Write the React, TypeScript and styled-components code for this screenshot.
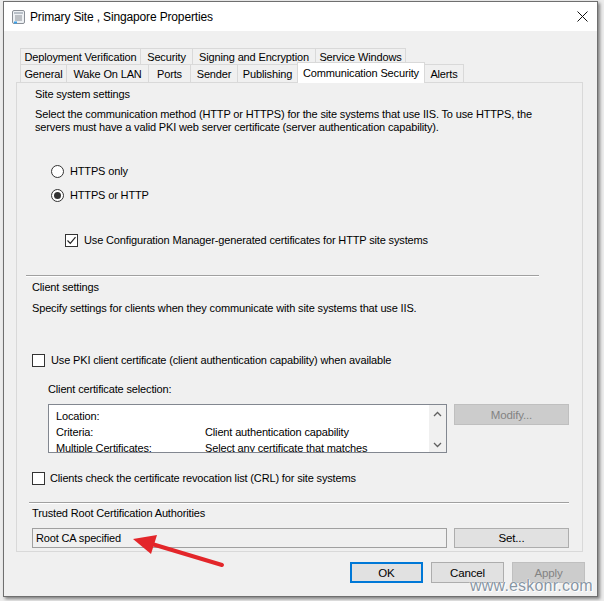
import styled, { createGlobalStyle } from 'styled-components';

const GlobalStyle = createGlobalStyle`
  html, body { margin: 0; padding: 0; }
  body {
    background: #ececec;
    font-family: "Liberation Sans", Arial, sans-serif;
    font-size: 11px;
    letter-spacing: -0.15px;
    color: #000;
  }
`;

const Screen = styled.div`
  position: relative;
  width: 604px;
  height: 601px;
  overflow: hidden;
  box-sizing: border-box;
  padding: 1px 0 0 3px;
  background: #ececec;
`;

const Window = styled.div`
  width: 595px;
  height: 596px;
  box-sizing: border-box;
  border: 1px solid #6f6f6f;
  background: #f0f0f0;
  box-shadow: 2px 2px 3px rgba(0, 0, 0, 0.45);
  display: flex;
  flex-direction: column;
`;

const TitleBar = styled.div`
  height: 29px;
  background: #fff;
  display: flex;
  align-items: center;
  padding: 0 9px 0 8px;
`;

const TitleText = styled.div`
  margin-left: 5px;
  font-size: 12px;
  flex: 1;
`;

const Body = styled.div`
  flex: 1;
  padding: 17px 0 0 12px;
  display: flex;
  flex-direction: column;
`;

const TabStrip = styled.div`
  margin-left: 4px;
  display: flex;
  flex-direction: column;
`;

const TabRow = styled.div<{ $h: number }>`
  display: flex;
  height: ${(p) => p.$h}px;
  align-items: flex-end;
`;

const Tab = styled.div<{ $w: number; $active?: boolean }>`
  position: relative;
  box-sizing: border-box;
  width: ${(p) => p.$w}px;
  height: ${(p) => (p.$active ? 'calc(100% + 3px)' : '100%')};
  margin-left: -1px;
  margin-bottom: ${(p) => (p.$active ? '-1px' : '0')};
  z-index: ${(p) => (p.$active ? 2 : 0)};
  border: 1px solid #d9d9d9;
  border-bottom: none;
  background: ${(p) => (p.$active ? '#fff' : '#f0f0f0')};
  display: flex;
  align-items: center;
  justify-content: center;
  white-space: nowrap;
  padding-top: ${(p) => (p.$active ? '0' : '1px')};
  &:first-child {
    margin-left: 0;
  }
`;

const Panel = styled.div`
  position: relative;
  z-index: 1;
  box-sizing: border-box;
  width: 567px;
  height: 470px;
  border: 1px solid #d9d9d9;
  background: #f0f0f0;
  display: flex;
  flex-direction: column;
`;

const Line = styled.div<{ $top: number; $indent: number; $lh?: number }>`
  margin-top: ${(p) => p.$top}px;
  margin-left: ${(p) => p.$indent}px;
  line-height: ${(p) => p.$lh ?? 14}px;
  white-space: nowrap;
`;

const OptionRow = styled.div<{ $top: number; $indent: number; $gap?: number }>`
  margin-top: ${(p) => p.$top}px;
  margin-left: ${(p) => p.$indent}px;
  height: 14px;
  display: flex;
  align-items: center;
  gap: ${(p) => p.$gap ?? 6}px;
  white-space: nowrap;
`;

const Radio = styled.span<{ $checked?: boolean }>`
  box-sizing: border-box;
  width: 13px;
  height: 13px;
  border-radius: 50%;
  border: 1px solid #333;
  background: #fff;
  display: flex;
  align-items: center;
  justify-content: center;
  &::after {
    content: '';
    width: 7px;
    height: 7px;
    border-radius: 50%;
    background: ${(p) => (p.$checked ? '#333' : 'transparent')};
  }
`;

const Box = styled.span`
  box-sizing: border-box;
  width: 13px;
  height: 13px;
  border: 1px solid #333;
  background: #fff;
  display: flex;
  align-items: center;
  justify-content: center;
`;

const Separator = styled.div<{ $top: number; $indent: number; $w: number }>`
  margin-top: ${(p) => p.$top}px;
  margin-left: ${(p) => p.$indent}px;
  width: ${(p) => p.$w}px;
  border-top: 1px solid #a0a0a0;
  border-bottom: 1px solid #fff;
`;

const ControlRow = styled.div<{ $top: number; $indent: number }>`
  margin-top: ${(p) => p.$top}px;
  margin-left: ${(p) => p.$indent}px;
  display: flex;
  align-items: flex-start;
  gap: 7px;
`;

const ListBox = styled.div`
  position: relative;
  box-sizing: border-box;
  width: 399px;
  height: 49px;
  border: 1px solid #828790;
  background: #fff;
  overflow: hidden;
  padding: 3px 0 0 7px;
`;

const ListItem = styled.div`
  display: flex;
  line-height: 16px;
  white-space: nowrap;
`;

const ListKey = styled.span`
  width: 149px;
`;

const ScrollBar = styled.div`
  position: absolute;
  top: 0;
  right: 0;
  bottom: 0;
  width: 17px;
  background: #f0f0f0;
  display: flex;
  flex-direction: column;
  justify-content: space-between;
  align-items: center;
  padding: 6px 0 4px;
  box-sizing: border-box;
`;

const TextBox = styled.div`
  box-sizing: border-box;
  width: 415px;
  height: 20px;
  border: 1px solid #a0a0a0;
  background: #f0f0f0;
  padding-left: 3px;
  line-height: 18px;
`;

const Button = styled.div<{ $w: number; $h: number; $disabled?: boolean; $default?: boolean }>`
  box-sizing: border-box;
  width: ${(p) => p.$w}px;
  height: ${(p) => p.$h}px;
  border: ${(p) =>
    p.$default ? '2px solid #0078d7' : p.$disabled ? '1px solid #bfbfbf' : '1px solid #adadad'};
  background: ${(p) => (p.$disabled ? '#cccccc' : '#e1e1e1')};
  color: ${(p) => (p.$disabled ? '#838383' : '#000')};
  display: flex;
  align-items: center;
  justify-content: center;
  font-size: 11.5px;
`;

const ButtonBar = styled.div`
  margin-top: 10px;
  padding-right: 12px;
  display: flex;
  justify-content: flex-end;
  gap: 8px;
`;

const Overlay = styled.svg`
  position: absolute;
  left: 0;
  top: 0;
  z-index: 5;
  pointer-events: none;
`;

const Watermark = styled.div`
  position: absolute;
  z-index: 6;
  left: 470px;
  top: 577px;
  font-size: 16px;
  color: #8795a3;
  letter-spacing: 0.2px;
  text-shadow: 0 0 1px #fff, 0 0 1px #fff, 1px 1px 0 #fff;
`;

const WindowIcon = () => (
  <svg width="13" height="14" viewBox="0 0 13 14">
    <rect x="0.5" y="0.5" width="12" height="13" rx="1.5" fill="#eef1f4" stroke="#8a8f96" />
    <rect x="2" y="2" width="9" height="2" fill="#b9c0c8" />
    <line x1="3" y1="6" x2="10" y2="6" stroke="#8a8f96" />
    <line x1="3" y1="8" x2="10" y2="8" stroke="#8a8f96" />
    <line x1="3" y1="10" x2="10" y2="10" stroke="#8a8f96" />
    <rect x="2" y="11.5" width="3" height="2" fill="#3aa0e8" />
  </svg>
);

const CloseIcon = () => (
  <svg width="11" height="11" viewBox="0 0 11 11">
    <path d="M0.5 0.5 L10.5 10.5 M10.5 0.5 L0.5 10.5" stroke="#111" strokeWidth="1" />
  </svg>
);

const Check = () => (
  <svg width="11" height="11" viewBox="0 0 11 11">
    <path d="M1.5 5.5 L4.3 8.3 L9.5 2.2" fill="none" stroke="#222" strokeWidth="1.2" />
  </svg>
);

const Chevron = ({ up }: { up?: boolean }) => (
  <svg width="9" height="6" viewBox="0 0 9 6">
    <path
      d={up ? 'M1 5 L4.5 1.5 L8 5' : 'M1 1 L4.5 4.5 L8 1'}
      fill="none"
      stroke="#606060"
      strokeWidth="1.3"
    />
  </svg>
);

const backTabs = [
  { label: 'Deployment Verification', w: 121 },
  { label: 'Security', w: 53 },
  { label: 'Signing and Encryption', w: 124 },
  { label: 'Service Windows', w: 91 },
];

const frontTabs = [
  { label: 'General', w: 47 },
  { label: 'Wake On LAN', w: 83 },
  { label: 'Ports', w: 43 },
  { label: 'Sender', w: 48 },
  { label: 'Publishing', w: 61 },
  { label: 'Communication Security', w: 128, active: true },
  { label: 'Alerts', w: 40 },
];

const certRows = [
  ['Location:', ''],
  ['Criteria:', 'Client authentication capability'],
  ['Multiple Certificates:', 'Select any certificate that matches'],
];

export default function App() {
  return (
    <Screen>
      <GlobalStyle />
      <Window>
        <TitleBar>
          <WindowIcon />
          <TitleText>Primary Site , Singapore Properties</TitleText>
          <CloseIcon />
        </TitleBar>
        <Body>
          <TabStrip>
            <TabRow $h={16}>
              {backTabs.map((t) => (
                <Tab key={t.label} $w={t.w}>
                  {t.label}
                </Tab>
              ))}
            </TabRow>
            <TabRow $h={18}>
              {frontTabs.map((t) => (
                <Tab key={t.label} $w={t.w} $active={t.active}>
                  {t.label}
                </Tab>
              ))}
            </TabRow>
          </TabStrip>
          <Panel>
            <Line $top={4} $indent={18}>
              Site system settings
            </Line>
            <Line $top={7} $indent={18} $lh={13}>
              Select the communication method (HTTP or HTTPS) for the site systems that use IIS. To
              use HTTPS, the
              <br />
              servers must have a valid PKI web server certificate (server authentication
              capability).
            </Line>
            <OptionRow $top={30} $indent={34}>
              <Radio />
              HTTPS only
            </OptionRow>
            <OptionRow $top={10} $indent={34}>
              <Radio $checked />
              HTTPS or HTTP
            </OptionRow>
            <OptionRow $top={31} $indent={48}>
              <Box>
                <Check />
              </Box>
              Use Configuration Manager-generated certificates for HTTP site systems
            </OptionRow>
            <Separator $top={28} $indent={9} $w={513} />
            <Line $top={3} $indent={15}>
              Client settings
            </Line>
            <Line $top={7} $indent={15}>
              Specify settings for clients when they communicate with site systems that use IIS.
            </Line>
            <OptionRow $top={38} $indent={15}>
              <Box />
              Use PKI client certificate (client authentication capability) when available
            </OptionRow>
            <Line $top={15} $indent={31}>
              Client certificate selection:
            </Line>
            <ControlRow $top={8} $indent={31}>
              <ListBox>
                {certRows.map(([k, v]) => (
                  <ListItem key={k}>
                    <ListKey>{k}</ListKey>
                    <span>{v}</span>
                  </ListItem>
                ))}
                <ScrollBar>
                  <Chevron up />
                  <Chevron />
                </ScrollBar>
              </ListBox>
              <Button $w={115} $h={21} $disabled>
                Modify...
              </Button>
            </ControlRow>
            <OptionRow $top={18} $indent={15} $gap={5}>
              <Box />
              Clients check the certificate revocation list (CRL) for site systems
            </OptionRow>
            <Separator $top={17} $indent={12} $w={540} />
            <Line $top={2} $indent={15}>
              Trusted Root Certification Authorities
            </Line>
            <ControlRow $top={8} $indent={15}>
              <TextBox>Root CA specified</TextBox>
              <Button $w={115} $h={20}>
                Set...
              </Button>
            </ControlRow>
          </Panel>
          <ButtonBar>
            <Button $w={73} $h={21} $default>
              OK
            </Button>
            <Button $w={73} $h={21}>
              Cancel
            </Button>
            <Button $w={73} $h={21} $disabled>
              Apply
            </Button>
          </ButtonBar>
        </Body>
      </Window>
      <Overlay width="604" height="601" viewBox="0 0 604 601">
        <line x1="222" y1="565" x2="152" y2="544" stroke="#e3262a" strokeWidth="4" strokeLinecap="round" />
        <polygon points="133,539 157,535 151,554" fill="#e3262a" />
      </Overlay>
      <Watermark>www.eskonr.com</Watermark>
    </Screen>
  );
}
